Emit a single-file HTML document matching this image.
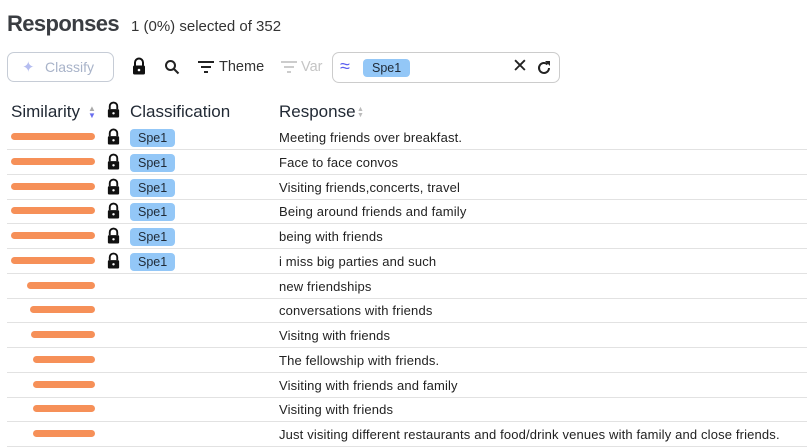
<!DOCTYPE html>
<html><head><meta charset="utf-8"><style>
*{margin:0;padding:0;box-sizing:border-box}
body{width:807px;height:446px;background:#fff;font-family:"Liberation Sans",sans-serif;color:#2a2e36;position:relative;overflow:hidden}
.a{position:absolute}
.h1{left:7px;top:11px;font-size:22px;font-weight:bold;color:#3a3d42;letter-spacing:-0.6px}
.sub{left:131px;top:18px;font-size:15px;color:#333}
.btn{left:7px;top:52px;width:107px;height:30px;border:1px solid #c6ccd6;border-radius:7px;color:#a8b3c9;font-size:14px}
.filter{left:332px;top:52px;width:228px;height:31px;border:1px solid #ccc;border-radius:7px}
.chip{background:#93c7f7;border-radius:4px;font-size:12.5px;color:#1f2a36;padding:2px 7px;line-height:14px}
.th{top:102px;font-size:17px;color:#222a35}
.row{left:7px;width:800px;height:1px;background:#e2e2e2}
.bar{height:7px;background:#f69058;border-radius:4px;right:712px}
.txt{left:279px;font-size:13px;color:#222;letter-spacing:0.15px}
</style></head><body>
<div class="a h1">Responses</div>
<div class="a sub">1 (0%) selected of 352</div>
<div class="a btn"><span class="a" style="left:14px;top:5px;color:#b5bdf0;font-size:15px">✦</span><span class="a" style="left:37px;top:6px">Classify</span></div>
<svg class="a" style="left:131px;top:57px" width="16" height="19" viewBox="0 0 16 18"><path d="M4 8V5a4 4 0 0 1 8 0v3" fill="none" stroke="#111" stroke-width="2"/><rect x="2" y="8" width="12" height="9" rx="1.5" fill="#111"/><circle cx="8" cy="12.5" r="1.3" fill="#fff"/></svg>
<svg class="a" style="left:164px;top:59px" width="16" height="16" viewBox="0 0 16 16"><circle cx="6.5" cy="6.5" r="4.5" fill="none" stroke="#222" stroke-width="2"/><path d="M10 10l4.5 4.5" stroke="#222" stroke-width="2"/></svg>
<svg class="a" style="left:198px;top:61px" width="16" height="12"><path d="M0 1h16M3 6h10M6 11h4" stroke="#222" stroke-width="2"/></svg>
<span class="a" style="left:219px;top:59px;font-size:14.5px;color:#333">Theme</span>
<svg class="a" style="left:281px;top:61px" width="16" height="12"><path d="M0 1h16M3 6h10M6 11h4" stroke="#ccc" stroke-width="2"/></svg>
<span class="a" style="left:301px;top:59px;font-size:14.5px;color:#c5c5c5">Var</span>
<div class="a filter"><span class="a" style="left:7px;top:3px;color:#5a5ef0;font-size:18px">≈</span><span class="a chip" style="left:30px;top:6px;padding:2px 9px">Spe1</span><span class="a" style="left:179px;top:2px;font-size:19px;color:#222">✕</span><svg class="a" style="left:203px;top:7px" width="16" height="16" viewBox="0 0 16 16"><path d="M13 8a5 5 0 1 1-1.5-3.6" fill="none" stroke="#222" stroke-width="2"/><path d="M9 1h5v5z" fill="#222"/></svg></div>
<div class="a th" style="left:11px">Similarity</div>
<div class="a" style="left:88px;top:105px;font-size:8px;line-height:7px;color:#aaa">▲<br><span style="color:#6a6ef0">▼</span></div>
<svg class="a" style="left:106px;top:101px" width="15" height="18" viewBox="0 0 16 18"><path d="M4 8V5a4 4 0 0 1 8 0v3" fill="none" stroke="#111" stroke-width="2"/><rect x="2" y="8" width="12" height="9" rx="1.5" fill="#111"/><circle cx="8" cy="12.5" r="1.3" fill="#fff"/></svg>
<div class="a th" style="left:130px">Classification</div>
<div class="a th" style="left:279px">Response</div>
<div class="a" style="left:357px;top:107px;font-size:7px;line-height:6px;color:#bbb">▲<br>▼</div>
<div id="rows"></div>
<script>
var t=["Meeting friends over breakfast.","Face to face convos","Visiting friends,concerts, travel","Being around friends and family","being with friends","i miss big parties and such","new friendships","conversations with friends","Visitng with friends","The fellowship with friends.","Visiting with friends and family","Visiting with friends","Just visiting different restaurants and food/drink venues with family and close friends."];
var s=[11,11,11,11,11,11,27,30,31,33,33,33,33];var h="";
for(var i=0;i<13;i++){var c=137+i*24.75;
h+='<div class="a bar" style="left:'+s[i]+'px;top:'+(c-4)+'px"></div>';
if(i<6){h+='<svg class="a" style="left:106px;top:'+(c-9)+'px" width="15" height="18" viewBox="0 0 16 18"><path d="M4 8V5a4 4 0 0 1 8 0v3" fill="none" stroke="#111" stroke-width="2"/><rect x="2" y="8" width="12" height="9" rx="1.5" fill="#111"/><circle cx="8" cy="12.5" r="1.3" fill="#fff"/></svg>';
h+='<span class="a chip" style="left:130px;top:'+(c-8)+'px;padding:2px 8px">Spe1</span>';}
h+='<div class="a txt" style="top:'+(c-7)+'px">'+t[i]+'</div>';
h+='<div class="a row" style="top:'+Math.round(c+12)+'px"></div>';}
document.getElementById("rows").innerHTML=h;
</script>
</body></html>
